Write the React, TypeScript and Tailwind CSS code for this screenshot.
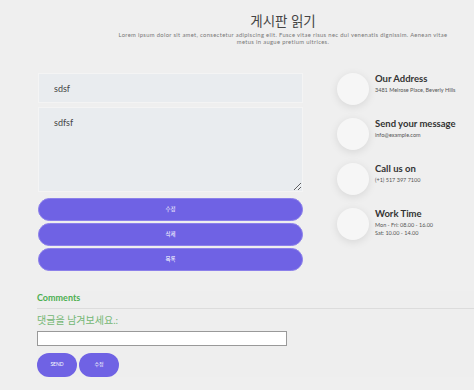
import React from 'react';

const INFO = [
  { title: 'Our Address', lines: ['3481 Melrose Place, Beverly Hills'] },
  { title: 'Send your message', lines: ['info@example.com'] },
  { title: 'Call us on', lines: ['(+1) 517 397 7100'] },
  { title: 'Work Time', lines: ['Mon - Fri: 08.00 - 16.00', 'Sat: 10.00 - 14.00'] },
];

export default function App() {
  return (
    <div
      className="w-[474px] h-[390px] overflow-hidden bg-[#efefef] text-[#333]"
      style={{ fontFamily: 'Lato, "Noto Sans CJK KR", sans-serif' }}
    >
      <div className="pl-[92px] pt-[12px] text-center">
        <h2 className="text-[13.5px] leading-[18px] text-[#444]">게시판 읽기</h2>
        <p className="mx-auto mt-[1px] w-[346px] text-[5.8px] leading-[7px] tracking-[0.35px] text-[#777]">
          Lorem ipsum dolor sit amet, consectetur adipiscing elit. Fusce vitae risus nec dui venenatis dignissim. Aenean vitae
          metus in augue pretium ultrices.
        </p>
      </div>

      <div className="mt-[28px] flex">
        <div className="ml-[38px] flex w-[265px] flex-col">
          <input
            readOnly
            value="sdsf"
            className="h-[30px] w-full border border-[#f4f4f4] bg-[#e9ecef] px-[15px] text-[9px] text-[#444] outline-none"
          />
          <textarea
            readOnly
            value="sdfsf"
            className="mt-[4px] h-[85px] w-full border border-[#f4f4f4] bg-[#e9ecef] px-[15px] py-[8px] text-[9px] text-[#444] outline-none"
          />
          <div className="mt-[6px] flex flex-col gap-[2px]">
            {['수정', '삭제', '목록'].map((t) => (
              <button
                key={t}
                className="h-[23px] w-full rounded-full border border-[#8c80ea] bg-[#6f62e4] text-[5.5px] text-white"
              >
                {t}
              </button>
            ))}
          </div>
        </div>

        <div className="ml-[34px] flex flex-col gap-[13px]">
          {INFO.map((it) => (
            <div key={it.title} className="flex items-start">
              <div className="h-[32px] w-[32px] shrink-0 rounded-full bg-[#f6f6f6] shadow-[0_2px_8px_rgba(0,0,0,0.10)]" />
              <div className="ml-[6px]">
                <div className="text-[9.5px] font-bold leading-[12px] text-[#333]">{it.title}</div>
                {it.lines.map((l) => (
                  <div key={l} className="mt-[2px] text-[5.5px] leading-[6px] text-[#555]">
                    {l}
                  </div>
                ))}
              </div>
            </div>
          ))}
        </div>
      </div>

      <div className="ml-[37px] mt-[20px] bg-[#eeeeee]">
        <h3 className="text-[9px] font-bold leading-[14px] text-[#4caf50]">Comments</h3>
        <div className="mt-[3px] border-t border-[#dcdcdc]" />
        <div className="mt-[4px] text-[10px] leading-[14px] text-[#73b773]">댓글을 남겨보세요.:</div>
        <input className="mt-[4px] block h-[15px] w-[250px] border border-[#999] bg-white outline-none" />
        <div className="mt-[7px] flex gap-[2px]">
          <button className="h-[24px] w-[40px] rounded-full bg-[#6f62e4] text-[5px] text-white">SEND</button>
          <button className="h-[24px] w-[40px] rounded-full bg-[#6f62e4] text-[5px] text-white">수정</button>
        </div>
      </div>
    </div>
  );
}
